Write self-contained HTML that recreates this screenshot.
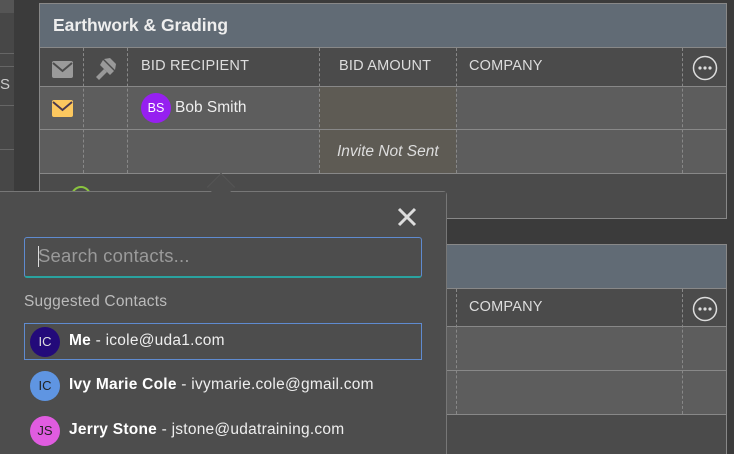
<!DOCTYPE html>
<html style="width:734px;height:454px;overflow:hidden"><head><style>
*{box-sizing:border-box;margin:0;padding:0}
body{width:734px;height:454px;overflow:hidden;background:#3b3b3b;font-family:"Liberation Sans",sans-serif;position:relative;color:#ddd}
.abs{position:absolute}
.card{position:absolute;border:1px solid #888;background:#4b4b4b}
.hdr{position:absolute;left:0;right:0;top:0;height:44px;background:#616b75;border-bottom:1px solid #888}
.th{position:absolute;font-size:14.5px;color:#ddd;letter-spacing:.2px}
.vl{position:absolute;width:0;border-left:1px dashed #888}
.hl{position:absolute;height:1px;background:#888}
.av{position:absolute;width:30px;height:30px;border-radius:50%;color:#fff;font-size:13px;text-align:center;line-height:30px}
.ct{position:absolute;left:69px;font-size:15.5px;color:#eee;letter-spacing:.25px}
.ct b{color:#fff}
</style></head><body>
<div class="abs" style="left:0;top:0;width:14px;height:454px;background:#474747"></div>
<div class="abs" style="left:0;top:0;width:14px;height:13px;background:#555"></div>
<div class="hl" style="left:0;top:53px;width:14px;background:#666"></div>
<div class="hl" style="left:0;top:66px;width:14px;background:#666"></div>
<div class="hl" style="left:0;top:105px;width:14px;background:#666"></div>
<div class="hl" style="left:0;top:149px;width:14px;background:#666"></div>
<div class="abs" style="left:0;top:76px;font-size:15px;color:#ccc">S</div>

<div class="card" style="left:39px;top:3px;width:688px;height:216px">
 <div class="hdr"><div class="abs" style="left:13px;top:11px;font-size:17.5px;font-weight:bold;color:#eee">Earthwork &amp; Grading</div></div>
 <div class="abs" style="left:0;right:0;top:83px;height:86px;background:#5d5d5d"></div>
 <div class="abs" style="left:279px;width:137px;top:83px;height:86px;background:#5e5b54"></div>
 <div class="hl" style="left:0;right:0;top:82px"></div>
 <div class="hl" style="left:0;right:0;top:125px"></div>
 <div class="hl" style="left:0;right:0;top:169px"></div>
 <div class="vl" style="left:43px;top:44px;height:125px"></div>
 <div class="vl" style="left:87px;top:44px;height:125px"></div>
 <div class="vl" style="left:279px;top:44px;height:125px"></div>
 <div class="vl" style="left:416px;top:44px;height:125px"></div>
 <div class="vl" style="left:642px;top:44px;height:125px"></div>
 <svg class="abs" style="left:12px;top:57px" width="21" height="17"><rect width="21" height="17" rx="2" fill="#9a9a9a"/><path d="M1 2 L10.5 10 L20 2" stroke="#4b4b4b" stroke-width="2" fill="none"/></svg>
 <svg class="abs" style="left:55px;top:53px" width="22" height="24"><g fill="#999"><path d="M9 2 L15 1 L21 7 L20 13 Z"/><path d="M8 3 L19 14 L15 18 L5 8 Z" /><path d="M9 12 L12 15 L4 23 L1 20 Z"/></g></svg>
 <div class="th" style="left:101px;top:54px">BID RECIPIENT</div>
 <div class="th" style="left:299px;top:54px">BID AMOUNT</div>
 <div class="th" style="left:429px;top:54px">COMPANY</div>
 <svg class="abs" style="left:652px;top:51px" width="26" height="26"><circle cx="13" cy="13" r="11.5" stroke="#ddd" stroke-width="1.5" fill="none"/><circle cx="8" cy="13" r="1.6" fill="#ddd"/><circle cx="13" cy="13" r="1.6" fill="#ddd"/><circle cx="18" cy="13" r="1.6" fill="#ddd"/></svg>
 <svg class="abs" style="left:12px;top:96px" width="21" height="17"><rect width="21" height="17" rx="2" fill="#fcc85f"/><path d="M1 2 L10.5 10 L20 2" stroke="#4a3a50" stroke-width="2" fill="none"/></svg>
 <div class="av" style="left:101px;top:89px;background:#9620f0;font-size:12.5px">BS</div>
 <div class="abs" style="left:135px;top:95px;font-size:15.5px;color:#eee">Bob Smith</div>
 <div class="abs" style="left:297px;top:139px;width:119px;overflow:hidden;white-space:nowrap;font-size:15.5px;font-style:italic;color:#ddd">Invite Not Sent</div>
 <svg class="abs" style="left:30px;top:182px" width="22" height="10"><path d="M2 10 A9 9 0 0 1 20 10" stroke="#8ac43f" stroke-width="2" fill="none"/></svg>
</div>

<div class="card" style="left:39px;top:244px;width:688px;height:215px">
 <div class="hdr"></div>
 <div class="abs" style="left:0;right:0;top:82px;height:88px;background:#5d5d5d"></div>
 <div class="hl" style="left:0;right:0;top:81px"></div>
 <div class="hl" style="left:0;right:0;top:125px"></div>
 <div class="hl" style="left:0;right:0;top:169px"></div>
 <div class="vl" style="left:416px;top:44px;height:125px"></div>
 <div class="vl" style="left:642px;top:44px;height:125px"></div>
 <div class="th" style="left:429px;top:54px">COMPANY</div>
 <svg class="abs" style="left:652px;top:51px" width="26" height="26"><circle cx="13" cy="13" r="11.5" stroke="#ddd" stroke-width="1.5" fill="none"/><circle cx="8" cy="13" r="1.6" fill="#ddd"/><circle cx="13" cy="13" r="1.6" fill="#ddd"/><circle cx="18" cy="13" r="1.6" fill="#ddd"/></svg>
</div>

<div class="abs" style="left:-2px;top:191px;width:449px;height:270px;background:#4d4d4d;border:1px solid #777;border-radius:0 4px 0 0"></div>
<div class="abs" style="left:211px;top:177px;width:20px;height:20px;background:#4d4d4d;transform:rotate(45deg);border-left:1px solid #555;border-top:1px solid #555"></div>
<div class="abs" style="left:0;top:192px;width:446px;height:20px;background:#4d4d4d"></div>
<svg class="abs" style="left:397px;top:207px" width="20" height="20"><path d="M2 2 L18 18 M18 2 L2 18" stroke="#ddd" stroke-width="3"/></svg>
<div class="abs" style="left:24px;top:237px;width:398px;height:41px;border:1px solid #5f8bd0;border-bottom:2px solid #2aa3a0;border-radius:3px"></div>
<div class="abs" style="left:38px;top:246px;width:1px;height:21px;background:#ddd"></div>
<div class="abs" style="left:38px;top:245px;font-size:18.5px;color:#9a9a9a;letter-spacing:.2px">Search contacts...</div>
<div class="abs" style="left:24px;top:293px;font-size:15.5px;color:#bbb;letter-spacing:.2px">Suggested Contacts</div>
<div class="abs" style="left:24px;top:323px;width:398px;height:37px;border:1px solid #5f8bd0"></div>
<div class="av" style="left:30px;top:327px;background:#230a7a;color:#ddd">IC</div>
<div class="ct" style="top:332px"><b>Me</b> - icole@uda1.com</div>
<div class="av" style="left:30px;top:371px;background:#5f95e2;color:#222">IC</div>
<div class="ct" style="top:376px"><b>Ivy Marie Cole</b> - ivymarie.cole@gmail.com</div>
<div class="av" style="left:30px;top:416px;background:#e05ce0;color:#222">JS</div>
<div class="ct" style="top:421px"><b>Jerry Stone</b> - jstone@udatraining.com</div>
</body></html>
